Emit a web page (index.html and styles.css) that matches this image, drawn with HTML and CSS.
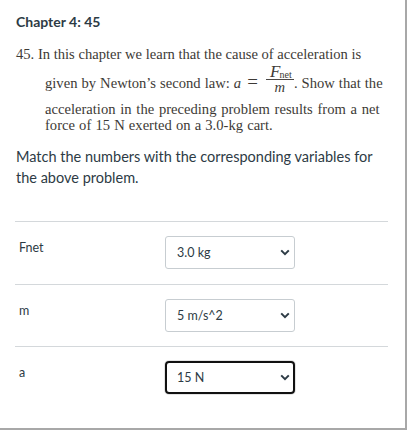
FILE: index.html
```html
<!DOCTYPE html>
<html>
<head>
<meta charset="utf-8">
<link rel="stylesheet" href="styles.css">
</head>
<body>
<div class="page">
  <h1 class="title">Chapter 4: 45</h1>
  <div class="problem">
    <p class="pline first">45. In this chapter we learn that the cause of acceleration is</p>
    <p class="pline eq">given by Newton’s second law: <i>a</i><span class="eqs">=</span><span class="frac"><span class="top"><i>F</i><sub>net</sub></span><span class="bot"><i>m</i></span></span>. Show that the</p>
    <p class="pline l3">acceleration in the preceding problem results from a net</p>
    <p class="pline l4">force of 15 N exerted on a 3.0-kg cart.</p>
  </div>
  <p class="prompt">Match the numbers with the corresponding variables for the above problem.</p>
  <div class="rows">
    <div class="row">
      <span class="label">Fnet</span>
      <div class="select"><span>3.0 kg</span><svg class="chev" width="10" height="7" viewBox="0 0 10 7"><path d="M1.2 1.4 L5 5.2 L8.8 1.4" fill="none" stroke="#2d3b45" stroke-width="2"/></svg></div>
    </div>
    <div class="row">
      <span class="label">m</span>
      <div class="select"><span>5 m/s^2</span><svg class="chev" width="10" height="7" viewBox="0 0 10 7"><path d="M1.2 1.4 L5 5.2 L8.8 1.4" fill="none" stroke="#2d3b45" stroke-width="2"/></svg></div>
    </div>
    <div class="row">
      <span class="label">a</span>
      <div class="select focus"><span>15 N</span><svg class="chev" width="10" height="7" viewBox="0 0 10 7"><path d="M1.2 1.4 L5 5.2 L8.8 1.4" fill="none" stroke="#2d3b45" stroke-width="2"/></svg></div>
    </div>
  </div>
</div>
</body>
</html>
```
FILE: styles.css
```css
html, body {
  margin: 0;
  padding: 0;
  background: #fff;
}
.page {
  width: 405px;
  height: 428px;
  border-right: 2px solid #a8a8a8;
  border-bottom: 2px solid #a8a8a8;
  font-family: Lato, "Liberation Sans", sans-serif;
  color: #2d3b45;
  overflow: hidden;
}
.title {
  margin: 0;
  padding: 13px 0 0 16px;
  font-size: 14px;
  font-weight: 700;
  line-height: 17px;
  color: #2d3b45;
}
.problem {
  margin: 16px 0 0 16px;
  font-family: "Liberation Serif", serif;
  font-size: 14.6px;
  color: #3d3a36;
}
.pline {
  margin: 0;
  padding-left: 29px;
  line-height: 16px;
  white-space: nowrap;
}
.pline.first {
  padding-left: 0;
}
.pline.eq {
  margin: 3px 0 8px;
  word-spacing: 0.4px;
}
.pline.l3 {
  word-spacing: 1.1px;
}
.pline.l4 {
  word-spacing: 0.5px;
}
.eqs {
  margin: 0 8px 0 6px;
  font-size: 19px;
}
.frac {
  display: inline-flex;
  flex-direction: column;
  align-items: stretch;
  vertical-align: 11px;
  width: 28px;
  text-align: center;
}
.frac .top {
  line-height: 13px;
  height: 13px;
  border-bottom: 1px solid #4a4744;
  padding: 0 0 1px 2px;
  font-size: 17px;
  white-space: nowrap;
}
.frac .top sub {
  font-size: 10px;
  vertical-align: -1px;
  margin-left: -1px;
}
.frac .bot {
  line-height: 12px;
  padding-top: 1px;
}
.prompt {
  margin: 13px 0 0 16px;
  width: 360px;
  font-size: 14.5px;
  line-height: 21px;
  color: #2d3b45;
}
.rows {
  margin: 33px 0 0 15px;
  width: 373px;
}
.row {
  display: flex;
  align-items: flex-start;
  border-top: 1px solid #d4d8db;
  height: 62.5px;
  padding-top: 14px;
  box-sizing: border-box;
}
.label {
  width: 146px;
  padding: 4px 0 0 4px;
  font-size: 12.5px;
  line-height: 16px;
}
.select {
  box-sizing: border-box;
  width: 130px;
  height: 33px;
  border: 1px solid #c7cdd1;
  border-radius: 3px;
  display: flex;
  align-items: center;
  justify-content: space-between;
  padding: 0 4px 0 11px;
  font-size: 12.5px;
  color: #2d3b45;
}
.select.focus {
  border: 2px solid #111;
  border-radius: 4px;
  padding-left: 10px;
  padding-right: 3px;
  box-shadow: 0 0 0 1px #e4e4e4;
}
.chev {
  display: block;
}
```
